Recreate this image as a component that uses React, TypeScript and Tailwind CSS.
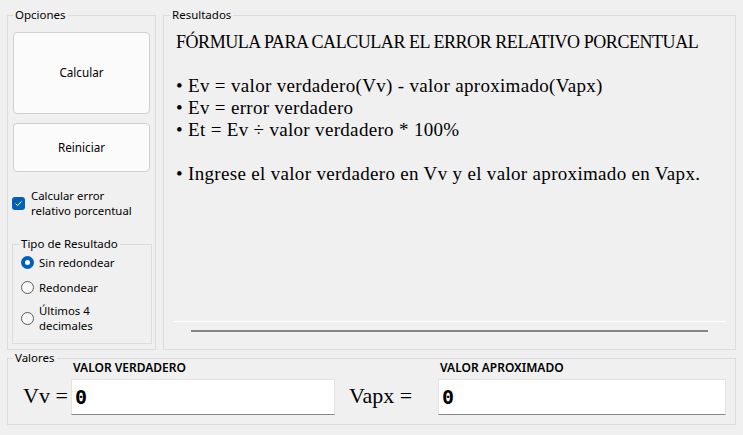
import React from "react";

const ui = { fontFamily: '"Noto Sans", "Open Sans", sans-serif' };
const serif = { fontFamily: '"Liberation Serif", "DejaVu Serif", serif' };
const mono = { fontFamily: '"DejaVu Sans Mono", "Liberation Mono", monospace' };

function Radio({ checked }: { checked?: boolean }) {
  if (checked) {
    return (
      <span className="flex h-[13px] w-[13px] shrink-0 items-center justify-center rounded-full bg-[#005fb8]">
        <span className="h-[5px] w-[5px] rounded-full bg-white" />
      </span>
    );
  }
  return <span className="h-[13px] w-[13px] shrink-0 rounded-full border border-[#5c5c5c] bg-[#f7f7f7]" />;
}

function ValueField({ label, caption, width, labelWidth, value }: { label: string; caption: string; width: string; labelWidth: string; value: string }) {
  return (
    <div className="flex items-end">
      <div className={`${labelWidth} pb-[8px] text-[22px] leading-none text-black`} style={serif}>
        {label}
      </div>
      <div className="flex flex-col">
        <div className="h-[15px] pl-[2px] text-[12px] leading-[15px] font-semibold text-black" style={ui}>
          {caption}
        </div>
        <div className={`${width} mt-[4px] flex h-[36px] items-center border border-[#e3e3e3] border-b-[#8a8a8a] bg-white pl-[3px]`}>
          <span className="text-[20px] font-bold text-black" style={mono}>
            {value}
          </span>
        </div>
      </div>
    </div>
  );
}

const legendCls = "ml-[5px] px-[2px] text-[11.5px] leading-[14px]";

export default function App() {
  return (
    <div className="h-[435px] w-[743px] overflow-hidden bg-[#f0f0f0] pl-[7px] pt-[8px] text-black" style={ui}>
      <div className="flex gap-[7px]">
        {/* Opciones */}
        <fieldset className="h-[342px] w-[149px] min-w-0 shrink-0 border border-[#dcdcdc]">
          <legend className={legendCls}>Opciones</legend>
          <div className="px-[5px]">
            <button className="mt-[10px] flex h-[82px] w-[137px] items-center justify-center rounded-[4px] border border-[#d0d0d0] bg-[#fbfbfb] text-[11.7px]">
              Calcular
            </button>
            <button className="mt-[9px] flex h-[49px] w-[137px] items-center justify-center rounded-[4px] border border-[#d0d0d0] bg-[#fbfbfb] text-[11.7px]">
              Reiniciar
            </button>
            <div className="mt-[16px] flex items-center gap-[6px]">
              <span className="-ml-px flex h-[13px] w-[13px] shrink-0 items-center justify-center rounded-[3px] bg-[#005fb8]">
                <svg width="9" height="9" viewBox="0 0 10 10" fill="none">
                  <path d="M1.8 5.2 L4 7.3 L8.3 2.8" stroke="white" strokeWidth="1.1" />
                </svg>
              </span>
              <span className="text-[11.4px] leading-[15px]">
                Calcular error
                <br />
                relativo porcentual
              </span>
            </div>
            <fieldset className="ml-[-1px] mt-[19px] h-[107px] w-[140px] min-w-0 border border-[#dcdcdc]">
              <legend className={legendCls + " ml-[6px]"}>Tipo de Resultado</legend>
              <div className="pl-[8px]">
                <div className="mt-[2px] flex h-[18px] items-center gap-[5px]">
                  <Radio checked />
                  <span className="text-[11.4px] leading-[15px]">Sin redondear</span>
                </div>
                <div className="mt-[7px] flex h-[18px] items-center gap-[5px]">
                  <Radio />
                  <span className="text-[11.4px] leading-[15px]">Redondear</span>
                </div>
                <div className="mt-[7px] flex h-[30px] items-center gap-[5px]">
                  <Radio />
                  <span className="text-[11.4px] leading-[15px]">
                    Últimos 4
                    <br />
                    decimales
                  </span>
                </div>
              </div>
            </fieldset>
          </div>
        </fieldset>

        {/* Resultados */}
        <fieldset className="flex h-[342px] w-[573px] min-w-0 shrink-0 flex-col border border-[#dcdcdc]">
          <legend className={legendCls + " ml-[6px]"}>Resultados</legend>
          <div className="flex h-[326px] flex-col">
            <div className="pl-[12px] pt-[9px] text-[19px] leading-[22px] tracking-[0.32px]" style={serif}>
              <div className="text-[18px] tracking-[-0.45px]">FÓRMULA PARA CALCULAR EL ERROR RELATIVO PORCENTUAL</div>
              <div>&nbsp;</div>
              <div>• Ev = valor verdadero(Vv) - valor aproximado(Vapx)</div>
              <div>• Ev = error verdadero</div>
              <div>• Et = Ev ÷ valor verdadero * 100%</div>
              <div>&nbsp;</div>
              <div>• Ingrese el valor verdadero en Vv y el valor aproximado en Vapx.</div>
            </div>
            <div className="mt-auto pb-[16px]">
              <div className="ml-[10px] h-px w-[552px] bg-white" />
              <div className="ml-[27px] mt-[8px] h-[2px] w-[517px] bg-[#858585]" />
            </div>
          </div>
        </fieldset>
      </div>

      {/* Valores */}
      <fieldset className="mt-px h-[74px] w-[729px] min-w-0 border border-[#dcdcdc]">
        <legend className={legendCls}>Valores</legend>
        <div className="-mt-[5px] flex gap-[14px] pl-[15px]">
          <ValueField label="Vv =" caption="VALOR VERDADERO" labelWidth="w-[48px]" width="w-[264px]" value="0" />
          <ValueField label="Vapx =" caption="VALOR APROXIMADO" labelWidth="w-[89px]" width="w-[288px]" value="0" />
        </div>
      </fieldset>
    </div>
  );
}
